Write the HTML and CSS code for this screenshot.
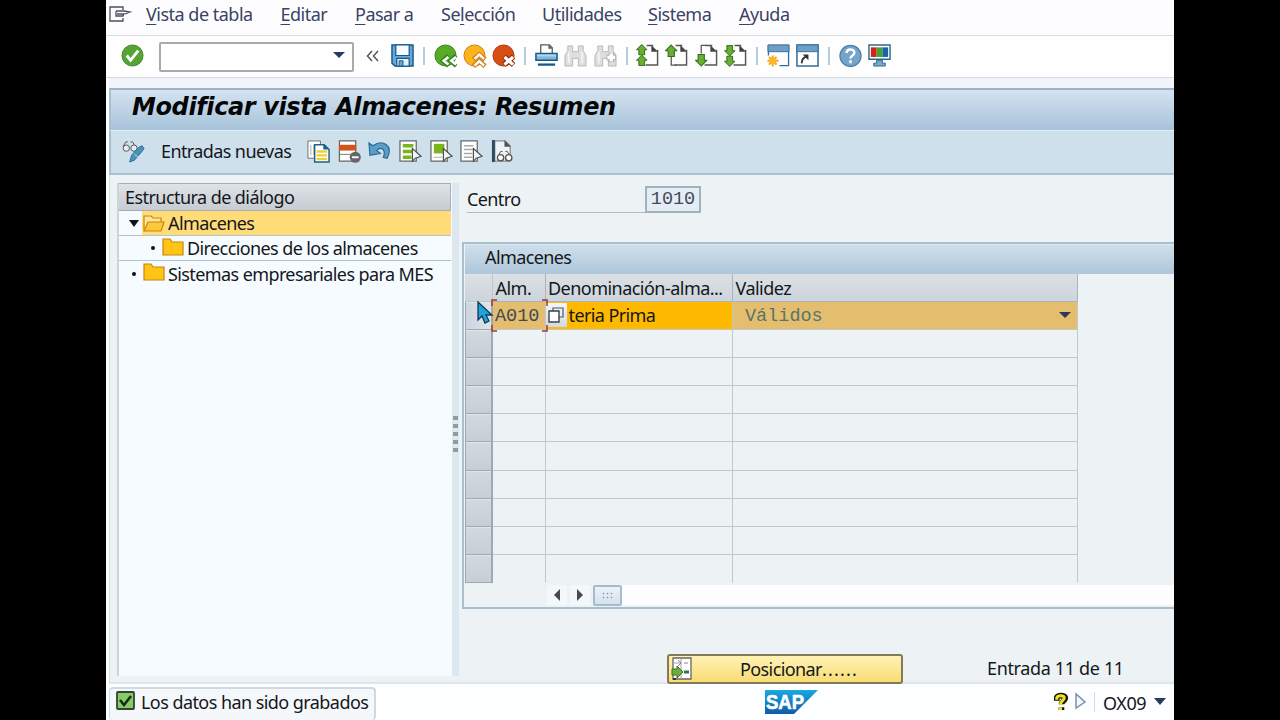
FILE: index.html
```html
<!DOCTYPE html>
<html lang="es">
<head>
<meta charset="utf-8">
<title>Modificar vista Almacenes: Resumen</title>
<link rel="stylesheet" href="styles.css">
</head>
<body>
<svg class="defs" aria-hidden="true">
  <defs>
    <symbol id="page" viewBox="0 0 24 24"><path d="M8 2h10l5 5v15H8z" fill="#fff"/><path d="M11 1.500h7M22.500 6v16H10" fill="none" stroke="#555" stroke-width="1.500"/><path d="M16 1v7h7z" fill="#444"/></symbol>
    <symbol id="up" viewBox="0 0 12 12"><path d="M6 .5 11.500 6H9v5.500H3V6H.5z" fill="#67ae31" stroke="#2e6b20"/></symbol>
    <symbol id="down" viewBox="0 0 12 12"><path d="M6 11.500 .5 6H3V.5h6V6h2.500z" fill="#67ae31" stroke="#2e6b20"/></symbol>
    <symbol id="folder" viewBox="0 0 22 18"><path d="M1 1h7l2 3h11v13H1z" fill="#ffc414" stroke="#c98508" stroke-width="1.200"/></symbol>
    <symbol id="binoc" viewBox="0 0 24 24"><path d="M4 2h5v6h6V2h5v5l3 5v11h-8v-8H9v8H1V12l3-5z" fill="#dedede" stroke="#b7b7b7"/><path d="M5 8v12M19 8v12" stroke="#f2f2f2" stroke-width="2"/></symbol>
    <symbol id="list" viewBox="0 0 24 24"><path d="M1 1h17v21H1z" fill="#fff" stroke="#686868" stroke-width="1.300"/></symbol>
    <symbol id="pointer" viewBox="0 0 24 24"><path d="M14 9v13l3-3 6-2z" fill="#f5f5f5" stroke="#4e4e4e" stroke-width="1.200"/></symbol>
  </defs>
</svg>
<div class="app">
  <nav class="menu">
    <svg class="menu-icon" viewBox="0 0 22 16"><path d="M14 4V1H1v14h13v-3M7 5h8M7 5v5h7l1-2H8M15 5l6 1-5 2" fill="none" stroke="#4b4f5a" stroke-width="1.300"/></svg>
    <span class="m1"><u>V</u>ista de tabla</span><span class="m2"><u>E</u>ditar</span><span class="m3"><u>P</u>asar a</span><span class="m4">Se<u>l</u>ección</span><span class="m5">U<u>t</u>ilidades</span><span class="m6"><u>S</u>istema</span><span class="m7"><u>A</u>yuda</span>
  </nav>

  <div class="toolbar">
    <svg class="ico" viewBox="0 0 24 24"><circle cx="12" cy="12" r="11" fill="#57a333" stroke="#3f8729"/><path d="m6 12 4 5 8-10" fill="none" stroke="#fff" stroke-width="3"/></svg>
    <div class="combo"><i class="caret"></i></div>
    <svg class="collapse" viewBox="0 0 13 12"><path d="M6 1 1.500 6 6 11M12 1 7.500 6l4.500 5" fill="none" stroke="#555" stroke-width="1.500"/></svg>
    <svg class="ico" viewBox="0 0 24 24"><path d="M1 1h22v22H4l-3-3z" fill="#65a9da" stroke="#17598b" stroke-width="1.500"/><path d="M5 1h14v11H5z" fill="#f7fbff" stroke="#17598b" stroke-width="1.300"/><path d="M6 15h13v8H6z" fill="#e6eef5" stroke="#17598b" stroke-width="1.300"/><path d="M8.500 17.500h4V23h-4z" fill="#65a9da" stroke="#17598b"/></svg>
    <i class="sep"></i>
    <div class="group">
      <svg class="ico" viewBox="0 0 24 24"><circle cx="12" cy="12" r="11" fill="#57ab26" stroke="#35801f"/><path d="m15 12-6 5.500 6 5.500M23 12l-6 5.500 6 5.500" fill="none" stroke="#35801f" stroke-width="4"/><path d="m15 13.500-5 4 5 4M23 13.500l-5 4 5 4" fill="none" stroke="#fff" stroke-width="2.600"/></svg>
      <svg class="ico" viewBox="0 0 24 24"><circle cx="12" cy="12" r="11" fill="#fbb51b" stroke="#d07a18"/><path d="m11 16 6-5 6 5M11 23l6-5 6 5" fill="none" stroke="#d07a18" stroke-width="5"/><path d="m12 15.500 5-4.500 5 4.500M12 22.500l5-4.500 5 4.500" fill="none" stroke="#fff" stroke-width="2.600"/></svg>
      <svg class="ico" viewBox="0 0 24 24"><circle cx="12" cy="12" r="11" fill="#d94e12" stroke="#ae370f"/><path d="m12.500 13 10 9M22.500 13l-10 9" stroke="#8e2b0d" stroke-width="5.500"/><path d="m13 13.500 9 8M22 13.500l-9 8" stroke="#fff" stroke-width="3.400"/></svg>
    </div>
    <i class="sep"></i>
    <div class="group">
      <svg class="ico" viewBox="0 0 24 24"><path d="M6 10V1h9l3 3v6" fill="#fff" stroke="#555" stroke-width="1.300"/><path d="M14 1v4h4z" fill="#555"/><path d="M1 10h22v7H1z" fill="#83b6da" stroke="#165b88" stroke-width="1.600"/><path d="M2 12h20" stroke="#b5d6eb" stroke-width="2"/><path d="M3 21.500h18" stroke="#165b88" stroke-width="2.400"/></svg>
      <svg class="ico"><use href="#binoc"/></svg>
      <svg class="ico" viewBox="0 0 24 24"><use href="#binoc" width="24" height="24"/><path d="M18 9v10M13 14h10" stroke="#b7b7b7" stroke-width="6"/><path d="M18 10v8M14 14h8" stroke="#fff" stroke-width="3.500"/></svg>
    </div>
    <i class="sep"></i>
    <div class="group">
      <svg class="ico" viewBox="0 0 24 24"><use href="#page" width="24" height="24"/><use href="#up" y="0" width="12" height="12"/><use href="#up" y="11" width="12" height="12"/></svg>
      <svg class="ico" viewBox="0 0 24 24"><use href="#page" width="24" height="24"/><path d="M6.500 13v9H12" fill="none" stroke="#555" stroke-width="1.300"/><use href="#up" y="0" width="13" height="14"/></svg>
      <svg class="ico" viewBox="0 0 24 24"><use href="#page" width="24" height="24"/><path d="M6.500 10V1.500H12" fill="none" stroke="#555" stroke-width="1.300"/><use href="#down" y="10" width="13" height="14"/></svg>
      <svg class="ico" viewBox="0 0 24 24"><use href="#page" width="24" height="24"/><use href="#down" y="1" width="12" height="12"/><use href="#down" y="12" width="12" height="12"/></svg>
    </div>
    <i class="sep"></i>
    <div class="group">
      <svg class="ico" viewBox="0 0 24 24"><path d="M1.500 1.500h21v21H13M1.500 12V1.500" fill="#fff" stroke="#376e99" stroke-width="1.400"/><path d="M1 1h22v7H1z" fill="#6f9fc6" stroke="#376e99"/><path d="M6 12v11.500M.5 17.500h11.500M2 13.500l8 8M10 13.500l-8 8" stroke="#f5a31b" stroke-width="2"/><circle cx="6" cy="17.500" r="4" fill="#fbb728"/></svg>
      <svg class="ico" viewBox="0 0 24 24"><path d="M1 1h22v22H1z" fill="#fff" stroke="#376e99" stroke-width="1.600"/><path d="M1 1h22v7H1z" fill="#6f9fc6" stroke="#376e99"/><path d="M6 20c0-4 2-6 5-7" fill="none" stroke="#333" stroke-width="2"/><path d="M7 11h6v6z" fill="#333"/></svg>
    </div>
    <i class="sep"></i>
    <div class="group">
      <svg class="ico" viewBox="0 0 24 24"><circle cx="12" cy="12.500" r="11" fill="#75a4cb" stroke="#4d7fa7" stroke-width="1.300"/><path d="M8 9.500c0-5 8-5 8-.5 0 3-4 3-4 6M12 17v3" fill="none" stroke="#fff" stroke-width="2.600"/></svg>
      <svg class="ico" viewBox="0 0 24 24"><path d="M1 1h22v15H1z" fill="#fff" stroke="#286a93" stroke-width="1.500"/><path d="M3 3.500h6v10H3z" fill="#d52218"/><path d="M9 3.500h6v10H9z" fill="#45a331"/><path d="M15 3.500h6v10h-6z" fill="#1766a4"/><path d="M9 17h6v3h3v3H6v-3h3z" fill="#78a8c6" stroke="#286a93"/></svg>
    </div>
  </div>

  <div class="window">
    <h1><span>Modificar vista Almacenes: Resumen</span></h1>
    <div class="actions">
      <svg class="ico" viewBox="0 0 24 24"><path d="M1 7 4 2h2M9 2h2l3 5" fill="none" stroke="#555"/><circle cx="4.500" cy="8.500" r="3.300" fill="#e4edf3" stroke="#555"/><circle cx="12.500" cy="8.500" r="3.300" fill="#e4edf3" stroke="#555"/><path d="m8 23 2-7 7-8 4-2 2 3-3 4-7 8z" fill="#4e91b8" stroke="#2c7198"/><path d="m13 15 4 3" stroke="#bdd8e7"/></svg>
      <span class="new">Entradas nuevas</span>
      <div class="group action-icons">
        <svg class="ico" viewBox="0 0 24 24"><path d="M1 1h13v18H1z" fill="#fff" stroke="#6d6d6d"/><path d="M4 5v11M7 5v11" stroke="#aaa"/><path d="M8 5h10l5 5v13H8z" fill="#fff" stroke="#18618d" stroke-width="1.500"/><path d="M17 4v6h6z" fill="#18618d"/><path d="M10 12h11M10 16h11M10 20h11" stroke="#f0cf35" stroke-width="2.400"/></svg>
        <svg class="ico" viewBox="0 0 24 24"><path d="M1.500 1h17v21h-17z" fill="#fff" stroke="#666" stroke-width="1.300"/><path d="M1 5h18v6H1z" fill="#d5521b"/><path d="M2 15h14" stroke="#777"/><circle cx="18" cy="18" r="5.800" fill="#666"/><path d="M14.500 18h7" stroke="#fff" stroke-width="2"/></svg>
        <svg class="ico" viewBox="0 0 24 24"><path d="m1 3 1 13 11-2-4-3c5-5 10-1 7 7l4 1C27 5 15-1 5 6z" fill="#5c9cc5" stroke="#236b94" stroke-width="1.200"/></svg>
        <svg class="ico" viewBox="0 0 24 24"><use href="#list" width="24" height="24"/><path d="M4 6h11M4 12h10M4 18h9" stroke="#79b51c" stroke-width="3.800"/><use href="#pointer" width="24" height="24"/></svg>
        <svg class="ico" viewBox="0 0 24 24"><use href="#list" width="24" height="24"/><path d="M4 4h11v10H4z" fill="#79b51c"/><path d="M4 18h9" stroke="#aaa"/><use href="#pointer" width="24" height="24"/></svg>
        <svg class="ico" viewBox="0 0 24 24"><use href="#list" width="24" height="24"/><path d="M4 6h10M4 10h10M4 14h9M4 18h9" stroke="#aaa" stroke-width="1.500"/><use href="#pointer" width="24" height="24"/></svg>
        <svg class="ico" viewBox="0 0 24 24"><path d="M4 1h11l5 5v16H4z" fill="#eef3f6" stroke="#707070"/><path d="M2.500 0v23" stroke="#2c4961" stroke-width="3"/><path d="M14 0v7h7z" fill="#555"/><path d="m7 18 3-6h2m3 0h2l4 6" fill="none" stroke="#555"/><circle cx="10" cy="18.500" r="3.300" fill="#fff" stroke="#555" stroke-width="1.400"/><circle cx="18.500" cy="18.500" r="3.300" fill="#fff" stroke="#555" stroke-width="1.400"/></svg>
      </div>
    </div>

    <main class="content">
      <aside class="tree">
        <div class="tree-head">Estructura de diálogo</div>
        <div class="node root"><i class="caret dark"></i><div class="selected"><svg class="folder" viewBox="0 0 22 18"><path d="M1 16V2h7l2 2h8v4" fill="#ffe59a" stroke="#c98508" stroke-width="1.200"/><path d="M1 17 5 8h16l-3 9z" fill="#ffc73c" stroke="#c98508" stroke-width="1.200"/></svg><span class="t1">Almacenes</span></div></div>
        <div class="node child"><i class="dot"></i><svg class="folder"><use href="#folder"/></svg><span class="t2">Direcciones de los almacenes</span></div>
        <div class="node last"><i class="dot"></i><svg class="folder"><use href="#folder"/></svg><span class="t3">Sistemas empresariales para MES</span></div>
      </aside>
      <div class="splitter"><i></i><i></i><i></i><i></i><i></i></div>
      <section class="detail">
        <div class="field"><label>Centro</label><output>1010</output></div>
        <div class="box">
          <div class="box-title"><span>Almacenes</span></div>
          <div class="grid">
            <div class="row head"><b></b><span class="h1c">Alm.</span><span class="h2c">Denominación-alma...</span><span class="h3c">Validez</span></div>
            <div class="row active"><b></b><span class="code">A010<svg class="focus" viewBox="0 0 57 33"><path d="M6 1H1v6M51 1h5v6M6 32H1v-6M51 32h5v-6" fill="none" stroke="#a03c2a" stroke-width="1.500"/></svg></span><span class="name"><i class="match"><svg viewBox="0 0 16 16"><path d="M5 5V1h10v9h-4" fill="#e8eef5" stroke="#4e596b" stroke-width="1.200"/><path d="M1 4h10v11H1z" fill="#fff" stroke="#39424e" stroke-width="1.400"/></svg></i><em>teria Prima</em></span><span class="valid">Válidos<i class="caret"></i></span>
              <svg class="cursor" viewBox="0 0 16 23"><path d="M1 1v18l4-4 3 7 4-2-3-6h6z" fill="#19a6dc" stroke="#17364f" stroke-width="1.300"/></svg></div>
            <div class="row"><b></b><span></span><span></span><span></span></div>
            <div class="row"><b></b><span></span><span></span><span></span></div>
            <div class="row"><b></b><span></span><span></span><span></span></div>
            <div class="row"><b></b><span></span><span></span><span></span></div>
            <div class="row"><b></b><span></span><span></span><span></span></div>
            <div class="row"><b></b><span></span><span></span><span></span></div>
            <div class="row"><b></b><span></span><span></span><span></span></div>
            <div class="row"><b></b><span></span><span></span><span></span></div>
            <div class="row end"><b></b><span></span><span></span><span></span></div>
          </div>
          <div class="scroll"><div class="arrow"><svg viewBox="0 0 6 12"><path d="M6 0v12L0 6z" fill="#444b50"/></svg></div><div class="arrow"><svg viewBox="0 0 6 12"><path d="M0 0v12l6-6z" fill="#444b50"/></svg></div><div class="track"><div class="thumb"><svg viewBox="0 0 12 8"><path d="M1 3l1-1M5 3l1-1M9 3l1-1M1 7l1-1M5 7l1-1M9 7l1-1" stroke="#8998a8" stroke-width="1.400"/></svg></div></div></div>
        </div>
        <div class="bottom">
          <div class="button"><svg viewBox="0 0 22 24"><path d="M2 1h18v21H2z" fill="#fff" stroke="#666" stroke-width="1.300"/><path d="M10 2v20M2 6h8" stroke="#9aa2ae"/><path d="m7 3 3 3-3 3M13 6h4" fill="none" stroke="#a07090"/><path d="M13 15h5" stroke="#257a53" stroke-width="3"/><path d="M1 12h5V9l6 6-6 6v-3H1z" fill="#70ae3a" stroke="#3a6b2b"/><path d="M2 22h3" stroke="#333" stroke-width="2"/></svg><span>Posicionar<em class="dots">......</em></span></div>
          <span class="entry">Entrada 11 de 11</span>
        </div>
      </section>
    </main>
  </div>

  <footer class="status">
    <div class="message"><svg viewBox="0 0 19 19"><rect x="1" y="1" width="17" height="17" rx="1" fill="#88c968" stroke="#34432d" stroke-width="1.800"/><path d="m4 9 4 5 7-9" fill="none" stroke="#112e11" stroke-width="2.500"/></svg><span>Los datos han sido grabados</span></div>
    <div class="logo"><svg viewBox="0 0 54 26"><defs><linearGradient id="blue" x2="0" y2="1"><stop stop-color="#18a9e5"/><stop offset="1" stop-color="#1258aa"/></linearGradient></defs><path d="M0 1h53L29 25H0z" fill="url(#blue)"/><text x="1" y="20" textLength="38" lengthAdjust="spacingAndGlyphs" class="sap">SAP</text></svg></div>
    <svg class="help" viewBox="0 0 15 20"><path d="M3 8V4.500C4 2 11 2 12 4.500c1 3-4 4-4 7.500M8 15v3" fill="none" stroke="#171700" stroke-width="6"/><path d="M3 7V5c1-3 8-3 8 0S7 8 7 12M7 15v3" fill="none" stroke="#f1e320" stroke-width="3.200"/></svg>
    <svg class="play" viewBox="0 0 11 16"><path d="M1 1v14l9-6z" fill="#f2f8fd" stroke="#7893af" stroke-width="1.500"/></svg>
    <i class="vsep"></i><span class="code-tx">OX09</span><i class="caret"></i>
  </footer>
</div>
</body>
</html>
```
FILE: styles.css
```css
* { box-sizing: border-box; }
body { margin: 0; height: 720px; overflow: hidden; background: #000; color: #14171b; font: 18px/24px "Noto Sans", "Open Sans", sans-serif; letter-spacing: -0.6px; }
svg { display: block; flex: none; overflow: visible; }
span, label { white-space: nowrap; }
.defs { position: absolute; width: 0; height: 0; }
.app { width: 1068px; height: 720px; margin: 0 auto; overflow: hidden; background: #fff; display: flex; flex-direction: column; }

.menu { height: 36px; flex: none; display: flex; align-items: flex-start; padding: 2px 0 0 3px; border-bottom: 1px solid #dcdce4; background: #fdfdff; color: #3b4263; letter-spacing: -0.5px; }
.menu-icon { width: 22px; height: 16px; margin: 4px 15px 0 0; }
.menu u { text-decoration-thickness: 1px; text-underline-offset: 3px; }
.m1 { width: 134.500px; } .m2 { width: 74.500px; } .m3 { width: 86px; } .m4 { width: 101px; } .m5 { width: 106px; } .m6 { width: 91px; }

.toolbar { height: 42px; flex: none; display: flex; align-items: center; padding: 0 0 2px 15px; border-bottom: 1px solid #d5d9e0; background: #fefeff; }
.ico { width: 23px; height: 23px; flex: none; }
.combo { width: 195px; height: 30px; margin: 2px 12px 0 15px; border: 2px solid #aaa9ad; border-radius: 2px; background: #fff; display: flex; justify-content: flex-end; align-items: center; padding: 0 7px 3px 0; }
.caret { width: 0; height: 0; flex: none; border: 6px solid transparent; border-top-color: #263c5b; border-bottom: 0; }
.collapse { width: 13px; height: 12px; margin-right: 12px; }
.sep { width: 2px; height: 18px; flex: none; margin: 0 8.500px 0 9px; background: #b4cce0; }
.group { display: flex; gap: 6.400px; }

.window { height: 606px; flex: none; margin: 0 0 0 3px; border-top: 10px solid #f1f5fb; display: flex; flex-direction: column; }
h1 { height: 42px; flex: none; margin: 0; padding: 2px 0 0 21px; border-top: 2px solid #9fb2c5; border-left: 2px solid #a9c0d2; background: linear-gradient(#d4e3ef, #a7c3da); font: italic bold 24px/30px "DejaVu Sans", sans-serif; letter-spacing: -0.38px; color: #050607; }
.actions { height: 45px; flex: none; display: flex; align-items: center; padding: 0 0 2px 11px; background: #cee0ec; border: solid #a9c0d2; border-width: 0 0 2px 2px; border-top: 1px solid #e2edf5; }
.new { margin: 0 15px 1px 16px; width: 131px; }
.action-icons { gap: 7.700px; }

.content { height: 509px; display: flex; background: #edf2f5; border-left: 1px solid #d5dde4; border-bottom: 2px solid #e1e5e9; padding-left: 7px; }
.tree { width: 335px; height: 493px; margin-top: 8px; flex: none; background: #f5fbff; border-left: 2px solid #cbd4da; padding-right: 1px; }
.tree-head { height: 28px; border: 1px solid #a5afb8; border-left: 0; background: linear-gradient(#dfe3e6, #c6ccd2); padding: 1px 0 0 6px; letter-spacing: -0.56px; }
.node { height: 25px; display: flex; align-items: center; border-bottom: 1px solid #afc6ce; }
.node.last { border: 0; }
.node .caret { margin: 0 3px 0 10px; }
.caret.dark { border-width: 7px 5px 0; border-top-color: #101317; }
.selected { flex: 1; height: 24px; display: flex; align-items: center; background: #ffdc78; padding-left: 1px; gap: 3px; }
.folder { width: 22px; height: 18px; }
.dot { width: 4px; height: 4px; border-radius: 2px; background: #111; flex: none; }
.child .dot { margin: 0 7px 0 32px; }
.last .dot { margin: 0 7px 0 13px; }
.child .folder, .last .folder { margin: 0 3px 3px 0; }

.splitter { width: 7px; height: 493px; margin-top: 8px; flex: none; background: #dce7f0; display: flex; flex-direction: column; align-items: center; gap: 4px; padding-top: 233px; }
.splitter i { width: 5px; height: 4px; background: #9199a3; }
.detail { flex: 1; min-width: 0; padding-left: 3px; }
.field { height: 67px; display: flex; padding: 11px 0 0 5px; }
.field label { width: 178px; height: 27px; padding-top: 1px; border-bottom: 1px solid #b0bac1; }
.field output { width: 56px; height: 27px; border: 2px solid #a5b0bd; background: #e4edf6; text-align: center; }
output, .code, .valid { font-family: "Liberation Mono", monospace; font-size: 18.500px; letter-spacing: 0; color: #424a52; }
.box { height: 367px; border: 2px solid #aabfce; border-width: 2px 0 2px 2px; padding-left: 1px; }
.box-title { height: 30px; background: linear-gradient(#cfdfea, #adc6da); border-top: 1px solid #d9e8f2; padding: 0 0 0 20px; }
.grid { width: 613px; }
.row { display: grid; grid-template-columns: 28px 52.500px 187.500px 345px; height: 28.100px; position: relative; }
.row > b { background: linear-gradient(#d3d9df, #c7ced5); border: 1px solid #9caab7; border-width: 0 2px 1px 1px; box-shadow: inset 0 1px #e1e6ea; }
.row > span { border: 1px solid #c0c8ce; border-width: 0 1px 1px 0; min-width: 0; }
.row.head { height: 28px; background: linear-gradient(#dce0e3, #ccd4dc); border-right: 1px solid #aab4be; }
.row.head > b { background: linear-gradient(#dce0e3, #ccd4dc); border-width: 0 1px 1px 0; border-color: #bdc5cc; }
.row.head > span { padding: 2px 0 0 2.500px; border-color: #aab4be; letter-spacing: -0.53px; }
.row.active > span { background: #e4bd6f; padding-top: 1px; }
.row.active > b { background: linear-gradient(90deg, #ccd5df, #dfe4ea); }
.row.active > .code { padding: 3px 0 0 2px; position: relative; }
.row.end > span { border-bottom-color: transparent; }
.focus { position: absolute; left: -2px; top: -3px; width: 57px; height: 33px; z-index: 2; }
.row.active > .name { background: #ffb900; display: flex; padding: 1px 0 0; }
.match { width: 21px; height: 24px; margin-left: 0; background: linear-gradient(#f4f6fa, #d0dae5); display: grid; place-items: center; }
.match svg { width: 16px; height: 16px; }
em { font-style: normal; }
.name em { padding-left: 2px; }
.row.active > .valid { display: flex; justify-content: space-between; align-items: center; padding: 2px 6px 0 12px; color: #59756a; }
.valid .caret { margin-bottom: 3px; }
.cursor { position: absolute; left: 12px; top: -1px; width: 16px; height: 23px; z-index: 3; }
.scroll { height: 24px; display: flex; padding: 2px 0 0 82px; }
.arrow { width: 20px; height: 20px; margin-right: 3px; background: #f5f8fb; display: grid; place-items: center; }
.arrow svg { width: 6px; height: 12px; }
.track { flex: 1; height: 20px; background: #fdfdff; }
.thumb { width: 29px; height: 21px; border: 2px solid #a8bacb; border-radius: 2px; background: linear-gradient(#ecf2f8, #d5e1ed); display: grid; place-items: center; }
.thumb svg { width: 12px; height: 8px; }
.bottom { display: flex; padding: 45px 0 0 205px; }
.button { width: 236px; height: 30px; border: 2px solid #827a58; border-radius: 3px; background: linear-gradient(#fff2b5, #f8dd74); display: flex; align-items: center; padding-left: 2px; }
.button svg { width: 22px; height: 24px; }
.button span { margin: 0 0 1px 47px; }
.dots { letter-spacing: 1.200px; }
.entry { margin: 2px 0 0 84px; letter-spacing: -0.35px; }

.status { height: 36px; flex: none; background: #fdfeff; display: flex; align-items: flex-start; padding-left: 3px; }
.message { width: 267px; height: 33px; flex: none; margin-top: 3px; border: 1px solid #cfd9e2; border-width: 2px 2px 0 1px; border-radius: 4px; display: flex; gap: 6px; padding: 1px 0 0 6px; background: #f4f8fb; letter-spacing: -0.56px; }
.message svg { width: 19px; height: 19px; margin-top: 1px; }
.logo { margin: 5px 0 0 389px; }
.logo svg { width: 54px; height: 26px; }
.sap { font: bold 20px "Liberation Sans", sans-serif; letter-spacing: 0; fill: #fff; stroke: #fff; stroke-width: .6px; }
.help { width: 14px; height: 19px; margin: 9px 0 0 235px; }
.play { width: 11px; height: 16px; margin: 9px 0 0 7px; }
.vsep { width: 1px; height: 20px; margin: 8px 8px 0 8px; background: #d4dce5; }
.code-tx { margin-top: 7px; width: 44px; letter-spacing: -0.4px; }
.status > .caret { margin: 14px 0 0 7px; border-top-width: 7px; }
```
